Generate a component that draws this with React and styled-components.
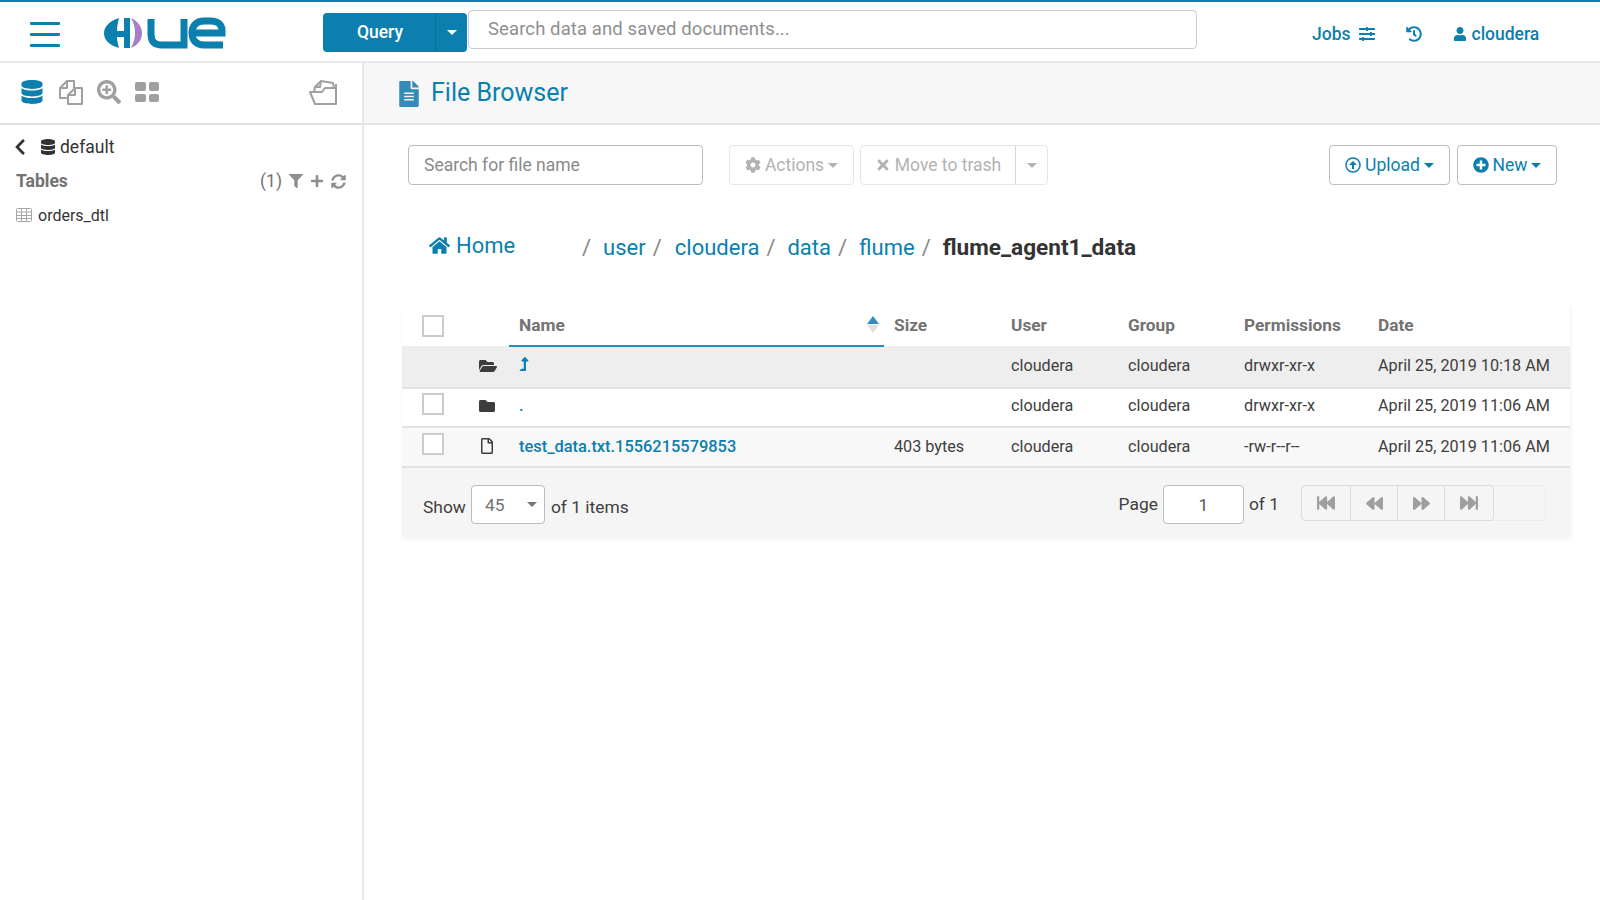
import React from 'react';
import styled, { createGlobalStyle } from 'styled-components';
import {
  FaDatabase, FaSearchPlus, FaFileAlt, FaChevronLeft,
  FaFilter, FaPlus, FaSyncAlt, FaHome, FaCog, FaTimes, FaRegArrowAltCircleUp, FaPlusCircle,
  FaFolderOpen, FaFolder, FaRegFile, FaLevelUpAlt, FaFastBackward, FaBackward, FaForward, FaFastForward,
  FaUser, FaHistory, FaSlidersH,
} from 'react-icons/fa';

const BLUE = '#0b7fad';

const Global = createGlobalStyle`
  html, body { margin: 0; padding: 0; background: #fff; }
  body { font-family: Roboto, "Liberation Sans", sans-serif; font-size: 16px; color: #333; overflow: hidden; }
  * { box-sizing: border-box; }
`;

const Page = styled.div`
  width: 1600px; height: 900px; display: flex; flex-direction: column;
  border-top: 2px solid ${BLUE};
`;
const TopBar = styled.header`
  height: 61px; flex: none; display: flex; align-items: flex-start;
  border-bottom: 2px solid #e8e8e8; background: #fff;
`;
const Burger = styled.div`
  width: 30px; margin: 20px 0 0 30px; display: flex; flex-direction: column; gap: 8px;
  span { height: 3px; background: ${BLUE}; border-radius: 1px; }
`;
const LogoBox = styled.svg`
  width: 122px; height: 32px; margin: 15px 0 0 44px; flex: none;
`;
const QueryGroup = styled.div`
  margin: 11px 0 0 97px; width: 144px; height: 39px; display: flex; flex: none;
  background: ${BLUE}; border-radius: 4px; color: #fff; font-weight: 500; font-size: 17.5px;
`;
const QueryLabel = styled.div`
  width: 113px; display: flex; align-items: center; justify-content: center; padding: 0 0 1px 2px;
  border-right: 1px solid #0a6f98;
`;
const QueryCaret = styled.div`
  flex: 1; display: flex; align-items: center; justify-content: center;
`;
const Caret = styled.i`
  display: inline-block; width: 0; height: 0; flex: none;
  border-left: ${p => p.$s || 5}px solid transparent; border-right: ${p => p.$s || 5}px solid transparent;
  border-top: ${p => p.$s || 5}px solid ${p => p.$c || 'currentColor'};
`;
const GlobalSearch = styled.div`
  margin: 8px 0 0 1px; width: 729px; height: 39px; flex: none; display: flex; align-items: center;
  padding: 0 0 2px 19px; border: 1px solid #ccc; border-radius: 4px; color: #8f8f8f; font-size: 18.5px;
  letter-spacing: .1px;
`;
const TopLinks = styled.nav`
  margin: 22px 0 0 115px; display: flex; align-items: center; color: ${BLUE}; font-weight: 500; font-size: 17.5px;
`;
const TopLink = styled.span`
  display: inline-flex; align-items: center; gap: ${p => p.$gap || 0}px; margin-right: ${p => p.$mr || 0}px;
`;

const Body = styled.div`flex: 1; display: flex; min-height: 0;`;
const Side = styled.aside`
  width: 364px; flex: none; border-right: 2px solid #e8e8e8; display: flex; flex-direction: column;
`;
const SideTools = styled.div`
  height: 62px; flex: none; border-bottom: 2px solid #e0e0e0; display: flex; align-items: center;
  padding: 0 24px 2px 20px; color: #a0a0a0; gap: 14px;
  svg { display: block; }
`;
const Spacer = styled.div`flex: 1;`;
const DbRow = styled.div`
  display: flex; align-items: center; margin: 11px 0 0 11px; height: 22px; color: #333; font-size: 17.5px;
`;
const TablesRow = styled.div`
  display: flex; align-items: center; margin: 12px 16px 0 16px; height: 22px; color: #737373; font-size: 17.5px;
  b { font-weight: 700; flex: 1; }
`;
const TableItem = styled.div`
  display: flex; align-items: center; gap: 6px; margin: 12px 0 0 16px; height: 22px; font-size: 16px; color: #333;
`;

const Main = styled.main`flex: 1; display: flex; flex-direction: column; min-width: 0;`;
const PageHead = styled.div`
  height: 62px; flex: none; background: #f7f7f7; border-bottom: 2px solid #e4e4e4; display: flex; align-items: center;
  padding: 0 0 2px 32px; color: ${BLUE}; font-size: 25px; gap: 9px;
  svg { color: #338bb8; margin-top: 3px; }
`;
const Toolbar = styled.div`
  display: flex; align-items: center; margin: 20px 43px 0 44px; height: 40px;
`;
const FileSearch = styled.div`
  width: 295px; height: 40px; border: 1px solid #bbb; border-radius: 4px; display: flex; align-items: center;
  padding-left: 15px; color: #8a8a8a; font-size: 17.5px; margin-right: 26px;
`;
const Btn = styled.div`
  height: 40px; display: inline-flex; align-items: center; justify-content: center; gap: 4px;
  width: ${p => p.$w}px; margin-left: ${p => p.$ml || 0}px;
  border: ${p => p.$active ? '1px solid #bdbdbd' : '1px solid #e6e6e6'}; border-radius: 4px;
  color: ${p => p.$active ? BLUE : '#b3b3b3'}; font-size: 17.5px;
`;
const SplitBtn = styled.div`
  display: flex; margin-left: 6px; height: 40px; border: 1px solid #e6e6e6; border-radius: 4px; color: #b3b3b3; font-size: 17.5px;
`;
const SplitMain = styled.div`
  width: 155px; display: flex; align-items: center; justify-content: center; gap: 4px; border-right: 1px solid #d8d8d8;
`;
const SplitCaret = styled.div`
  width: 31px; display: flex; align-items: center; justify-content: center;
`;
const Crumbs = styled.div`
  display: flex; align-items: center; margin: 42px 0 0 65px; height: 40px; font-size: 22px; color: ${BLUE};
`;
const HomeLink = styled.span`
  display: inline-flex; align-items: center; gap: 6px; width: 146px; position: relative; top: -2px;
`;
const Sep = styled.span`color: #888; margin: 0 ${p => p.$r || 12}px 0 7px;`;
const Current = styled.b`color: #333; font-weight: 700; font-size: 22.6px;`;

const Listing = styled.div`margin: 37px 30px 0 38px; box-shadow: 1px 2px 4px rgba(0,0,0,.06);`;
const Table = styled.table`
  width: 100%; border-collapse: collapse; table-layout: fixed; font-size: 16.2px;
`;
const Th = styled.th`
  height: 42px; padding: 0 10px; text-align: left; font-weight: 700; color: #737373; font-size: 17.3px;
  position: relative; background: #fff;
  border-bottom: ${p => p.$sorted ? `2px solid #1f8fc9` : '2px solid transparent'};
`;
const Row = styled.tr`
  background: ${p => p.$bg || '#fff'};
  td { border-bottom: 2px solid #e2e2e2; height: ${p => p.$h || 39}px; padding: 0 10px ${p => p.$pb || 0}px; color: #404040; white-space: nowrap; }
  &:first-child td { border-top: 2px solid #e2e2e2; }
`;
const Check = styled.div`
  width: 22px; height: 22px; border: 2px solid #ccc; background: #fff; margin: ${p => p.$mt || 0}px 0 ${p => p.$mb || 0}px 10px;
`;
const IconCell = styled.div`display: flex; color: #3d3d3d; margin-left: 2px; svg { display: block; }`;
const NameLink = styled.span`color: ${BLUE}; font-weight: 500; font-size: 16.4px;`;
const UpIcon = styled.span`display: inline-flex; margin-left: -2px;`;
const SortArrows = styled.div`
  position: absolute; right: 5px; top: 12px; display: flex; flex-direction: column; gap: 1px;
`;
const ArrowUp = styled.i`
  width: 0; height: 0; border-left: 6px solid transparent; border-right: 6px solid transparent;
  border-bottom: 8px solid #338bc2;
`;
const ArrowDown = styled.i`
  width: 0; height: 0; border-left: 6px solid transparent; border-right: 6px solid transparent;
  border-top: 8px solid #e0e0e0;
`;
const Footer = styled.div`
  height: 69px; background: #f5f5f5; display: flex; align-items: flex-start; padding: 17px 0 0 21px; font-size: 17.4px; color: #404040;
`;
const SelectBox = styled.div`
  width: 74px; height: 39px; background: #fff; border: 1px solid #bbb; border-radius: 4px; margin: 0 6px 0 5px;
  display: flex; align-items: center; justify-content: space-between; padding: 0 7px 0 13px; color: #737373; font-size: 17.4px;
`;
const FooterText = styled.span`line-height: 39px; margin-top: ${p => p.$mt || 0}px;`;
const PageInput = styled.div`
  width: 81px; height: 39px; background: #fff; border: 1px solid #bbb; border-radius: 4px; margin: 0 5px;
  display: flex; align-items: center; justify-content: center; color: #555;
`;
const Pager = styled.div`
  display: flex; height: 36px; margin-left: 22px; width: 245px; border: 1px solid #ececec; border-radius: 4px;
`;
const PagerBtns = styled.div`
  display: flex; border: 1px solid #dcdcdc; margin: -1px; border-radius: 4px; color: #9f9f9f;
`;
const PagerBtn = styled.div`
  width: ${p => p.$w}px; display: flex; align-items: center; justify-content: center;
  & + & { border-left: 1px solid #dcdcdc; }
`;
const Gap = styled.div`width: ${p => p.$w}px; flex: none;`;
const GridIcon = styled.div`
  width: 24px; height: 20px; display: grid; grid-template-columns: 1fr 1fr; grid-template-rows: 1fr 1fr; gap: 3px;
  span { background: #a0a0a0; border-radius: 2px; }
`;

function Logo() {
  return (
    <LogoBox viewBox="0 0 122 32">
      <path fill={BLUE} d="M15 1 C5 4 0 10 0 16 C0 23 5 28 15 31 C14 27 13 24 13 20 L20 20 L20 31 L26 31 L26 1 L20 1 L20 14 L13 14 C13 9 14 5 15 1 Z" />
      <path fill="#a77fc8" d="M27 1 C34 4 38 10 38 16 C38 23 34 28 27 31 C30 25 31 21 31 16 C31 11 30 6 27 1 Z" />
      <path fill="none" stroke={BLUE} strokeWidth="7" d="M47 2 L47 17 C47 25 51 28 58 28 L80 28 L80 2" />
      <path fill="none" stroke={BLUE} strokeWidth="7" d="M119 28 L100 28 C92 28 88 23 88 16 C88 9 92 4 100 4 L107 4 C114 4 118 8 118 13.500 L118 16 L90 16" />
    </LogoBox>
  );
}

function CopyIcon() {
  return (
    <svg width="25" height="25" viewBox="0 0 25 25" fill="none" stroke="#a0a0a0" strokeWidth="2" strokeLinejoin="round">
      <path d="M9 18 H2 V8 L9 1 H16 V8" />
      <path d="M9 1 V8 H2" />
      <path d="M17 8 H24 V24 H10 V15 Z" />
      <path d="M17 8 V15 H10" />
    </svg>
  );
}

function PaperFolderIcon() {
  return (
    <svg width="29" height="25" viewBox="0 0 29 25" fill="none" stroke="#a0a0a0" strokeWidth="2" strokeLinejoin="round">
      <path d="M1 12 H13 L16 8 H27 V24 H6 Z" />
      <path d="M5 12 L6 7 L12 1 L24 3 L25 8" />
      <path d="M12 1 L11 7 L6 7" />
      <path d="M27 8 V4" />
    </svg>
  );
}

function GridTableIcon() {
  return (
    <svg width="16" height="14" viewBox="0 0 16 14" fill="none" stroke="#a6a6a6" strokeWidth="1">
      <rect x=".5" y=".5" width="15" height="13" rx="1" />
      <path d="M.5 4 H15.500 M.5 7.500 H15.500 M.5 10.500 H15.500 M5.500 .5 V13.500 M10.500 .5 V13.500" />
    </svg>
  );
}

const rows = [
  { bg: '#eeeeee', h: 42, pb: 3, up: true, user: 'cloudera', group: 'cloudera', perm: 'drwxr-xr-x', date: 'April 25, 2019 10:18 AM' },
  { bg: '#fff', pb: 4, name: '.', folder: true, check: true, mb: 4, user: 'cloudera', group: 'cloudera', perm: 'drwxr-xr-x', date: 'April 25, 2019 11:06 AM' },
  { bg: '#f8f8f8', h: 40, pb: 2, file: true, check: true, mb: 4, name: 'test_data.txt.1556215579853', size: '403 bytes', user: 'cloudera', group: 'cloudera', perm: '-rw-r--r--', date: 'April 25, 2019 11:06 AM' },
];

export default function App() {
  return (
    <Page>
      <Global />
      <TopBar>
        <Burger><span /><span /><span /></Burger>
        <Logo />
        <QueryGroup>
          <QueryLabel>Query</QueryLabel>
          <QueryCaret><Caret $s={5} /></QueryCaret>
        </QueryGroup>
        <GlobalSearch>Search data and saved documents...</GlobalSearch>
        <TopLinks>
          <TopLink $gap={8} $mr={31}>Jobs <FaSlidersH size={16} /></TopLink>
          <TopLink $mr={31}><FaHistory size={16} /></TopLink>
          <TopLink $gap={5}><FaUser size={14} /> cloudera</TopLink>
        </TopLinks>
      </TopBar>
      <Body>
        <Side>
          <SideTools>
            <FaDatabase size={24} color={BLUE} />
            <CopyIcon />
            <FaSearchPlus size={24} />
            <GridIcon><span /><span /><span /><span /></GridIcon>
            <Spacer />
            <PaperFolderIcon />
          </SideTools>
          <DbRow>
            <FaChevronLeft size={18} color="#333" />
            <Gap $w={11} />
            <FaDatabase size={16} color="#333" />
            <Gap $w={4} />
            default
          </DbRow>
          <TablesRow>
            <b>Tables</b>
            (1)
            <Gap $w={7} />
            <FaFilter size={14} color="#8f8f8f" />
            <Gap $w={7} />
            <FaPlus size={14} color="#8f8f8f" />
            <Gap $w={7} />
            <FaSyncAlt size={15} color="#8f8f8f" />
          </TablesRow>
          <TableItem><GridTableIcon /> orders_dtl</TableItem>
        </Side>
        <Main>
          <PageHead><FaFileAlt size={26} /> File Browser</PageHead>
          <Toolbar>
            <FileSearch>Search for file name</FileSearch>
            <Btn $w={125}><FaCog size={16} /> Actions <Caret /></Btn>
            <SplitBtn>
              <SplitMain><FaTimes size={16} /> Move to trash</SplitMain>
              <SplitCaret><Caret /></SplitCaret>
            </SplitBtn>
            <Spacer />
            <Btn $active $w={121}><FaRegArrowAltCircleUp size={16} /> Upload <Caret /></Btn>
            <Btn $active $w={100} $ml={7}><FaPlusCircle size={16} /> New <Caret /></Btn>
          </Toolbar>
          <Crumbs>
            <HomeLink><FaHome size={21} /> Home</HomeLink>
            <Sep $r={12}>/</Sep>user<Sep $r={13}>/</Sep>cloudera<Sep>/</Sep>data<Sep>/</Sep>flume<Sep>/</Sep>
            <Current>flume_agent1_data</Current>
          </Crumbs>
          <Listing>
            <Table>
              <colgroup>
                <col width="65" /><col width="42" /><col width="375" /><col width="117" /><col width="117" /><col width="116" /><col width="134" /><col />
              </colgroup>
              <thead>
                <tr>
                  <Th><Check $mt={2} /></Th>
                  <Th />
                  <Th $sorted>Name<SortArrows><ArrowUp /><ArrowDown /></SortArrows></Th>
                  <Th>Size</Th><Th>User</Th><Th>Group</Th><Th>Permissions</Th><Th>Date</Th>
                </tr>
              </thead>
              <tbody>
                {rows.map((r, i) => (
                  <Row key={i} $bg={r.bg} $h={r.h} $pb={r.pb}>
                    <td>{r.check && <Check $mb={r.mb} />}</td>
                    <td>
                      <IconCell>
                        {r.up && <FaFolderOpen size={18} />}
                        {r.folder && <FaFolder size={16} />}
                        {r.file && <FaRegFile size={16} />}
                      </IconCell>
                    </td>
                    <td>
                      {r.up ? <UpIcon><FaLevelUpAlt size={14} color={BLUE} /></UpIcon> : <NameLink>{r.name}</NameLink>}
                    </td>
                    <td>{r.size}</td><td>{r.user}</td><td>{r.group}</td><td>{r.perm}</td><td>{r.date}</td>
                  </Row>
                ))}
              </tbody>
            </Table>
            <Footer>
              <FooterText $mt={3}>Show</FooterText>
              <SelectBox>45 <Caret $s={5} $c="#777" /></SelectBox>
              <FooterText $mt={3}>of 1 items</FooterText>
              <Spacer />
              <FooterText>Page</FooterText>
              <PageInput>1</PageInput>
              <FooterText>of 1</FooterText>
              <Pager>
                <PagerBtns>
                  <PagerBtn $w={48}><FaFastBackward size={18} /></PagerBtn>
                  <PagerBtn $w={47}><FaBackward size={17} /></PagerBtn>
                  <PagerBtn $w={47}><FaForward size={17} /></PagerBtn>
                  <PagerBtn $w={49}><FaFastForward size={18} /></PagerBtn>
                </PagerBtns>
              </Pager>
              <Gap $w={24} />
            </Footer>
          </Listing>
        </Main>
      </Body>
    </Page>
  );
}
